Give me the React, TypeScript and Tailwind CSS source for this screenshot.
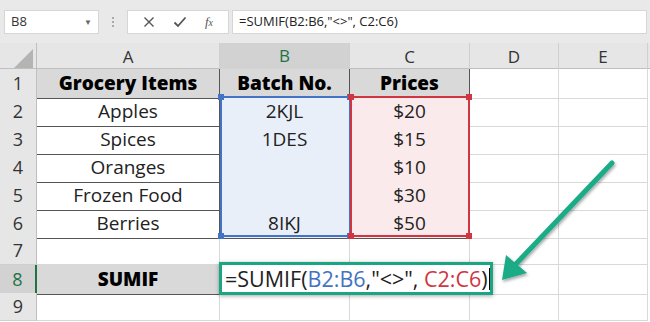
import React from "react";

const cols = ["A", "B", "C", "D", "E"];

const rows: Array<[string, string, string]> = [
  ["Grocery Items", "Batch No.", "Prices"],
  ["Apples", "2KJL", "$20"],
  ["Spices", "1DES", "$15"],
  ["Oranges", "", "$10"],
  ["Frozen Food", "", "$30"],
  ["Berries", "8IKJ", "$50"],
  ["", "", ""],
  ["SUMIF", "", ""],
  ["", "", ""],
];

const gridCols = "grid grid-cols-[37px_183px_130px_120px_89px_89px_1fr]";

const App: React.FC = () => {
  return (
    <div
      className="relative w-[650px] h-[322px] overflow-hidden bg-white text-[#222]"
      style={{ fontFamily: '"Open Sans", "Noto Sans", sans-serif' }}
    >
      {/* toolbar */}
      <div className="h-[43px] bg-[#e9e9e9] flex items-start pt-[10px] pl-[4px] gap-0">
        <div className="w-[95px] h-[24px] bg-white border border-[#d6d6d6] flex items-center justify-between px-[6px]">
          <span className="text-[13px] text-[#333]">B8</span>
          <span className="text-[8px] text-[#666]">▼</span>
        </div>
        <div className="w-[28px] h-[24px] flex flex-col items-center justify-center gap-[2px]">
          <span className="w-[2px] h-[2px] bg-[#aaa]" />
          <span className="w-[2px] h-[2px] bg-[#aaa]" />
          <span className="w-[2px] h-[2px] bg-[#aaa]" />
        </div>
        <div className="w-[102px] h-[24px] bg-white border border-[#d6d6d6] flex items-center justify-around px-[6px]">
          <svg width="12" height="12" viewBox="0 0 12 12">
            <path d="M1.5 1.5 L10.5 10.5 M10.5 1.5 L1.5 10.5" stroke="#555" strokeWidth="1.4" />
          </svg>
          <svg width="14" height="12" viewBox="0 0 14 12">
            <path d="M1.5 6.5 L5 10 L12.5 1.5" stroke="#555" strokeWidth="1.8" fill="none" />
          </svg>
          <span className="text-[13px] italic text-[#555]" style={{ fontFamily: '"Liberation Serif", serif' }}>
            f<span className="text-[10px]">x</span>
          </span>
        </div>
        <div className="ml-[3px] w-[415px] h-[24px] bg-white border border-[#d6d6d6] flex items-center px-[6px]">
          <span className="text-[13px] text-[#222]">=SUMIF(B2:B6,"&lt;&gt;", C2:C6)</span>
        </div>
      </div>

      {/* column headers */}
      <div className={`${gridCols} h-[26px] bg-[#e6e6e6] border-b border-[#bfbfbf]`}>
        <div className="relative border-r border-[#bfbfbf]">
          <div className="absolute right-[3px] bottom-[3px] w-0 h-0 border-l-[19px] border-l-transparent border-b-[19px] border-b-[#b4b4b4]" />
        </div>
        {cols.map((c) => (
          <div
            key={c}
            className={`flex items-center justify-center text-[17px] border-r border-[#cfcfcf] ${
              c === "B" ? "bg-[#d2d2d2] text-[#217346] border-b-2 border-b-[#217346]" : "text-[#333]"
            }`}
          >
            {c}
          </div>
        ))}
        <div />
      </div>

      {/* rows */}
      {rows.map((r, i) => {
        const n = i + 1;
        const isHead = n === 1;
        const inTable = n <= 6;
        const isSum = n === 8;
        return (
          <div key={n} className={`${gridCols} h-[28px]`}>
            <div
              className={`flex items-center justify-center text-[18px] border-b border-[#cfcfcf] ${
                isSum
                  ? "bg-[#d2d2d2] text-[#217346] border-r-2 border-r-[#217346]"
                  : "bg-[#e6e6e6] text-[#333] border-r border-r-[#bfbfbf]"
              }`}
            >
              {n}
            </div>
            <div
              className={`flex items-center justify-center text-[19px] ${
                isHead || isSum ? "bg-[#d9d9d9] font-extrabold text-black" : ""
              } ${inTable || isSum ? "border-b border-r border-[#555]" : "border-b border-r border-[#d9d9d9]"}`}
            >
              {r[0]}
            </div>
            <div
              className={`flex items-center justify-center text-[19px] ${
                isHead ? "bg-[#d9d9d9] font-extrabold text-black" : n <= 6 ? "bg-[#e9eff9]" : ""
              } ${inTable ? "border-b border-r border-[#555]" : "border-b border-r border-[#d9d9d9]"}`}
            >
              {r[1]}
            </div>
            <div
              className={`flex items-center justify-center text-[19px] ${
                isHead ? "bg-[#d9d9d9] font-extrabold text-black" : n <= 6 ? "bg-[#fbeaeb]" : ""
              } ${inTable ? "border-b border-r border-[#555]" : "border-b border-r border-[#d9d9d9]"}`}
            >
              {r[2]}
            </div>
            <div className="border-b border-r border-[#d9d9d9]" />
            <div className="border-b border-r border-[#d9d9d9]" />
            <div />
          </div>
        );
      })}

      {/* B2:B6 range highlight */}
      <div className="absolute left-[220px] top-[96px] w-[131px] h-[141px] border-2 border-[#4472c4] pointer-events-none">
        <span className="absolute -left-[4px] -top-[4px] w-[6px] h-[6px] bg-[#4472c4]" />
        <span className="absolute -right-[4px] -top-[4px] w-[6px] h-[6px] bg-[#4472c4]" />
        <span className="absolute -left-[4px] -bottom-[4px] w-[6px] h-[6px] bg-[#4472c4]" />
        <span className="absolute -right-[4px] -bottom-[4px] w-[6px] h-[6px] bg-[#4472c4]" />
      </div>
      {/* C2:C6 range highlight */}
      <div className="absolute left-[350px] top-[96px] w-[120px] h-[141px] border-2 border-[#cf3641] pointer-events-none">
        <span className="absolute -left-[4px] -top-[4px] w-[6px] h-[6px] bg-[#cf3641]" />
        <span className="absolute -right-[4px] -top-[4px] w-[6px] h-[6px] bg-[#cf3641]" />
        <span className="absolute -left-[4px] -bottom-[4px] w-[6px] h-[6px] bg-[#cf3641]" />
        <span className="absolute -right-[4px] -bottom-[4px] w-[6px] h-[6px] bg-[#cf3641]" />
      </div>

      {/* in-cell editor */}
      <div className="absolute left-[219px] top-[262px] w-[274px] h-[33px] border-[3px] border-[#1aa683] bg-white flex items-center pl-[3px] shadow-[0_1px_4px_rgba(0,0,0,0.35)]">
        <span className="text-[21.5px] leading-none text-[#222] whitespace-nowrap">
          =SUMIF(<span className="text-[#4472c4]">B2:B6</span>,"&lt;&gt;", <span className="text-[#cf3641]">C2:C6</span>)
        </span>
        <span className="ml-[1px] w-[1px] h-[22px] bg-black" />
      </div>

      {/* arrow */}
      <svg className="absolute left-0 top-0 pointer-events-none" width="650" height="322">
        <defs>
          <filter id="sh" x="-20%" y="-20%" width="140%" height="140%">
            <feDropShadow dx="1" dy="2" stdDeviation="1.5" floodColor="#000" floodOpacity="0.35" />
          </filter>
        </defs>
        <g filter="url(#sh)">
          <line x1="612" y1="163" x2="513" y2="267" stroke="#1bab87" strokeWidth="5" strokeLinecap="round" />
          <polygon points="502,280 506,255 527,273" fill="#1bab87" />
        </g>
      </svg>
    </div>
  );
};

export default App;
